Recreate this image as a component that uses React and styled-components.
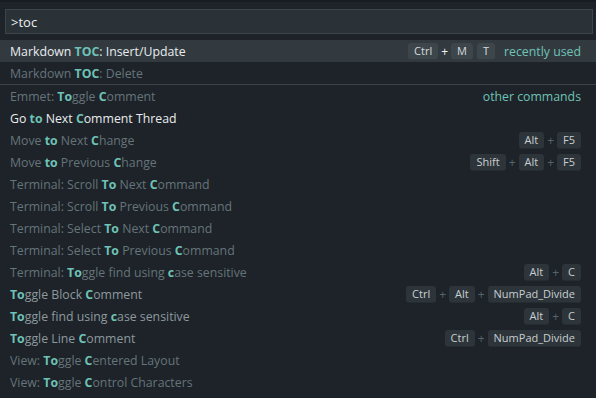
import React from "react";
import styled, { createGlobalStyle, css } from "styled-components";

const GlobalStyle = createGlobalStyle`
  html, body {
    margin: 0;
    padding: 0;
    background: #1d2328;
  }
  body {
    font-family: "Open Sans", "Noto Sans", sans-serif;
  }
`;

const commands = [
  { text: "Markdown [TOC]: Insert/Update", tone: "bright", keys: [["Ctrl", "M"], ["T"]], label: "recently used", selected: true },
  { text: "Markdown [TOC]: Delete", tone: "dim" },
  { text: "Emmet: [To]ggle [C]omment", tone: "dim", label: "other commands", separator: true },
  { text: "Go [to] Next [C]omment Thread", tone: "bright" },
  { text: "Move [to] Next [C]hange", tone: "dim", keys: [["Alt", "F5"]] },
  { text: "Move [to] Previous [C]hange", tone: "dim", keys: [["Shift", "Alt", "F5"]] },
  { text: "Terminal: Scroll [To] Next [C]ommand", tone: "dim" },
  { text: "Terminal: Scroll [To] Previous [C]ommand", tone: "dim" },
  { text: "Terminal: Select [To] Next [C]ommand", tone: "dim" },
  { text: "Terminal: Select [To] Previous [C]ommand", tone: "dim" },
  { text: "Terminal: [To]ggle find using [c]ase sensitive", tone: "dim", keys: [["Alt", "C"]] },
  { text: "[To]ggle Block [C]omment", tone: "mid", keys: [["Ctrl", "Alt", "NumPad_Divide"]] },
  { text: "[To]ggle find using [c]ase sensitive", tone: "mid", keys: [["Alt", "C"]] },
  { text: "[To]ggle Line [C]omment", tone: "mid", keys: [["Ctrl", "NumPad_Divide"]] },
  { text: "View: [To]ggle [C]entered Layout", tone: "dim" },
  { text: "View: [To]ggle [C]ontrol Characters", tone: "dim" },
];

const toneColors = {
  bright: "#e9ecee",
  mid: "#8d999f",
  dim: "#66747b",
};

const Palette = styled.div`
  width: 596px;
  height: 398px;
  box-sizing: border-box;
  border-top: 2px solid #171c20;
  padding-top: 7px;
  overflow: hidden;
`;

const InputBox = styled.div`
  height: 25px;
  margin: 0 3px 0 5px;
  box-sizing: border-box;
  background: #2a3237;
  border: 1px solid #3c454a;
  display: flex;
  align-items: center;
  padding-left: 5px;
  color: #eceff1;
  font-size: 13px;
`;

const List = styled.div`
  margin-top: 6px;
`;

const Row = styled.div`
  height: 22px;
  display: flex;
  align-items: center;
  padding: 0 15px 0 10px;
  font-size: 12.3px;
  color: ${(p) => toneColors[p.$tone]};
  background: ${(p) => (p.$selected ? "#323a40" : "transparent")};
  ${(p) =>
    p.$separator &&
    css`
      border-top: 1px solid #3a4348;
    `}
`;

const Title = styled.span`
  flex: 1;
  white-space: nowrap;
`;

const Match = styled.b`
  color: #6fc2b6;
  font-weight: 700;
`;

const Keys = styled.div`
  display: flex;
  align-items: center;
  gap: 4px;
`;

const Chord = styled.div`
  display: flex;
  align-items: center;
`;

const Key = styled.span`
  height: 17px;
  box-sizing: border-box;
  padding: 0 6px;
  display: flex;
  align-items: center;
  border-radius: 3px;
  font-size: 11px;
  color: ${(p) => (p.$selected ? "#d4d9dc" : "#c8ced1")};
  background: ${(p) => (p.$selected ? "#3d464b" : "#2d353a")};
  border-bottom: 1px solid ${(p) => (p.$selected ? "#353d42" : "#262d31")};
`;

const Plus = styled.span`
  margin: 0 3px;
  font-size: 12px;
  color: ${(p) => (p.$selected ? "#eef0f1" : "#56646b")};
`;

const Label = styled.span`
  margin-left: 9px;
  color: #6fc2b6;
`;

function Highlighted({ text }) {
  const parts = text.split(/(\[[^\]]+\])/);
  return parts.map((part, i) =>
    part.startsWith("[") ? <Match key={i}>{part.slice(1, -1)}</Match> : <React.Fragment key={i}>{part}</React.Fragment>
  );
}

function Keybinding({ chords, selected }) {
  return (
    <Keys>
      {chords.map((chord, ci) => (
        <Chord key={ci}>
          {chord.map((k, ki) => (
            <React.Fragment key={ki}>
              {ki > 0 && <Plus $selected={selected}>+</Plus>}
              <Key $selected={selected}>{k}</Key>
            </React.Fragment>
          ))}
        </Chord>
      ))}
    </Keys>
  );
}

export default function App() {
  return (
    <>
      <GlobalStyle />
      <Palette>
        <InputBox>&gt;toc</InputBox>
        <List>
          {commands.map((c, i) => (
            <Row key={i} $tone={c.tone} $selected={c.selected} $separator={c.separator}>
              <Title>
                <Highlighted text={c.text} />
              </Title>
              {c.keys && <Keybinding chords={c.keys} selected={c.selected} />}
              {c.label && <Label>{c.label}</Label>}
            </Row>
          ))}
        </List>
      </Palette>
    </>
  );
}
